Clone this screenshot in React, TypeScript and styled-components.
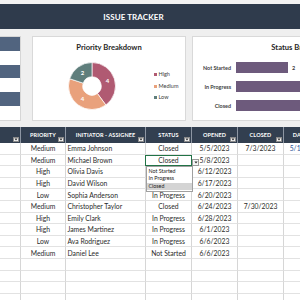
import React from 'react';
import styled, { createGlobalStyle } from 'styled-components';

const Global = createGlobalStyle`
  html, body { margin: 0; padding: 0; background: #ffffff; }
  body { font-family: Lato, "Liberation Sans", sans-serif; overflow: hidden; }
  * { box-sizing: border-box; }
`;

const Page = styled.div`
  width: 300px;
  height: 300px;
  overflow: hidden;
  background: #ffffff;
`;

const TopStrip = styled.div`
  height: 4px;
  background: #f3f3f3;
`;

const TitleBar = styled.div`
  height: 25px;
  background: #2f3b4c;
  color: #ffffff;
  display: flex;
  align-items: center;
  justify-content: center;
  padding-right: 33px;
  font-weight: 700;
  font-size: 8px;
  letter-spacing: 0.1px;
`;

const Dashboard = styled.div`
  height: 98px;
  background: #efefef;
  display: flex;
  align-items: flex-start;
  padding-top: 7px;
`;

const KpiColumn = styled.div`
  width: 21px;
  height: 85px;
  flex: none;
  background: #ffffff;
  border: 1px solid #d6d6d6;
  border-left: none;
  display: flex;
  flex-direction: column;
`;

const KpiBar = styled.div`
  height: 14px;
  background: #51647f;
`;

const KpiBody = styled.div`
  height: 14.3px;
  background: #ffffff;
`;

const Panel = styled.div<{ $w: number; $ml: number }>`
  width: ${(p) => p.$w}px;
  margin-left: ${(p) => p.$ml}px;
  height: 85px;
  flex: none;
  background: #ffffff;
  border: 1px solid #d9d9d9;
  display: flex;
  flex-direction: column;
`;

const PanelTitle = styled.div`
  text-align: center;
  font-weight: 700;
  font-size: 7.6px;
  color: #262626;
  padding-top: 5px;
  line-height: 10px;
`;

const DonutBody = styled.div`
  display: flex;
  align-items: center;
  padding-left: 35px;
  margin-top: 10px;
  gap: 38px;
`;

const Legend = styled.div`
  display: flex;
  flex-direction: column;
  gap: 4.5px;
`;

const LegendItem = styled.div`
  display: flex;
  align-items: center;
  gap: 1.5px;
  font-size: 5.5px;
  color: #404040;
  line-height: 7px;
`;

const Swatch = styled.span<{ $c: string }>`
  width: 3px;
  height: 3px;
  background: ${(p) => p.$c};
`;

const BarChart = styled.div`
  display: grid;
  grid-template-columns: 38px 1fr;
  column-gap: 5px;
  row-gap: 8px;
  margin-top: 10px;
  align-items: center;
`;

const BarLabel = styled.div`
  text-align: right;
  font-weight: 700;
  font-size: 5.4px;
  color: #404040;
`;

const BarTrack = styled.div`
  display: flex;
  align-items: center;
  gap: 4px;
  height: 11px;
`;

const Bar = styled.div`
  height: 11px;
  background: #6d5a7c;
  flex: none;
`;

const BarValue = styled.span`
  font-size: 5.5px;
  font-weight: 700;
  color: #404040;
`;

const Sheet = styled.div`
  display: grid;
  grid-template-columns: 21px 45px 80px 46px 46px 46px 46px;
  grid-auto-rows: 11.6px;
  grid-template-rows: 16px;
  width: 330px;
`;

const HeadCell = styled.div`
  position: relative;
  background: #323f50;
  color: #ffffff;
  font-weight: 700;
  font-size: 5.5px;
  display: flex;
  align-items: center;
  justify-content: center;
  border-right: 1px solid #8d96a3;
  letter-spacing: 0.1px;
  padding-bottom: 1px;
`;

const FilterBox = styled.span`
  position: absolute;
  right: 1px;
  bottom: 1px;
  width: 6px;
  height: 5px;
  background: #f4f4f4;
  border: 0.5px solid #8a8a8a;
  display: flex;
  align-items: center;
  justify-content: center;
`;

const Cell = styled.div<{ $align?: 'left' | 'center'; $blue?: boolean }>`
  position: relative;
  font-size: 6.8px;
  color: ${(p) => (p.$blue ? '#2f5597' : '#2b2b2b')};
  display: flex;
  align-items: center;
  justify-content: ${(p) => (p.$align === 'left' ? 'flex-start' : 'center')};
  padding-left: ${(p) => (p.$align === 'left' ? '1.5px' : '0')};
  border-right: 1px solid #d6d6d6;
  border-bottom: 1px solid #e2e2e2;
  white-space: nowrap;
`;

const Selection = styled.div`
  position: absolute;
  inset: 0 -1px -1px -1px;
  border: 1.5px solid #217346;
  z-index: 2;
  pointer-events: none;
`;

const DropButton = styled.div`
  position: absolute;
  left: calc(100% + 1px);
  top: 4px;
  width: 7px;
  height: 7px;
  background: #f7f7f7;
  border: 0.5px solid #9a9a9a;
  display: flex;
  align-items: center;
  justify-content: center;
  z-index: 3;
`;

const DropList = styled.div`
  position: absolute;
  left: -0.5px;
  top: calc(100% + 1px);
  width: 47px;
  background: #ffffff;
  border: 0.5px solid #a0a0a0;
  z-index: 3;
  display: flex;
  flex-direction: column;
  padding: 1px 0;
`;

const DropItem = styled.div<{ $active?: boolean }>`
  height: 7.2px;
  line-height: 7.2px;
  font-size: 5.3px;
  color: #222222;
  padding-left: 2px;
  background: ${(p) => (p.$active ? '#d4d4d4' : 'transparent')};
`;

const Tri = () => (
  <svg width="4" height="3" viewBox="0 0 4 3">
    <path d="M0.3 0.5 L3.7 0.5 L2 2.6 Z" fill="#333" />
  </svg>
);

type Row = { p: string; n: string; s: string; o: string; c?: string; d?: string };

const rows: Row[] = [
  { p: 'Medium', n: 'Emma Johnson', s: 'Closed', o: '5/5/2023', c: '7/3/2023', d: '5/15/2023' },
  { p: 'Medium', n: 'Michael Brown', s: 'Closed', o: '5/8/2023' },
  { p: 'High', n: 'Olivia Davis', s: 'Not Started', o: '6/12/2023' },
  { p: 'High', n: 'David Wilson', s: 'In Progress', o: '6/17/2023' },
  { p: 'Low', n: 'Sophia Anderson', s: 'In Progress', o: '6/20/2023' },
  { p: 'Medium', n: 'Christopher Taylor', s: 'Closed', o: '6/24/2023', c: '7/30/2023' },
  { p: 'High', n: 'Emily Clark', s: 'In Progress', o: '6/28/2023' },
  { p: 'High', n: 'James Martinez', s: 'In Progress', o: '6/1/2023' },
  { p: 'Low', n: 'Ava Rodriguez', s: 'In Progress', o: '6/6/2023' },
  { p: 'Medium', n: 'Daniel Lee', s: 'Not Started', o: '6/6/2023' },
];

const headers = ['', 'PRIORITY', 'INITIATOR - ASSIGNEE', 'STATUS', 'OPENED', 'CLOSED', 'DATE DUE'];

const segs = [
  { label: 'High', value: 4, color: '#b05a72' },
  { label: 'Medium', value: 4, color: '#e9a17c' },
  { label: 'Low', value: 2, color: '#5f7e7c' },
];

function arcPath(a0: number, a1: number, R: number, r: number, cx: number, cy: number) {
  const p = (a: number, rad: number) => [cx + rad * Math.sin(a), cy - rad * Math.cos(a)];
  const [x0, y0] = p(a0, R);
  const [x1, y1] = p(a1, R);
  const [x2, y2] = p(a1, r);
  const [x3, y3] = p(a0, r);
  const large = a1 - a0 > Math.PI ? 1 : 0;
  return `M${x0} ${y0} A${R} ${R} 0 ${large} 1 ${x1} ${y1} L${x2} ${y2} A${r} ${r} 0 ${large} 0 ${x3} ${y3} Z`;
}

const Donut = () => {
  const total = segs.reduce((s, x) => s + x.value, 0);
  let acc = 0;
  const cx = 24;
  const cy = 24;
  return (
    <svg width="48" height="48" viewBox="0 0 48 48">
      {segs.map((s) => {
        const a0 = (acc / total) * Math.PI * 2;
        acc += s.value;
        const a1 = (acc / total) * Math.PI * 2;
        const mid = (a0 + a1) / 2;
        const lr = 16.3;
        return (
          <g key={s.label}>
            <path d={arcPath(a0, a1, 23.5, 9.2, cx, cy)} fill={s.color} stroke="#ffffff" strokeWidth="0.7" />
            <text
              x={cx + lr * Math.sin(mid)}
              y={cy - lr * Math.cos(mid) + 2}
              fontSize="6"
              fontWeight="700"
              fill="#ffffff"
              textAnchor="middle"
              fontFamily="Lato, 'Liberation Sans', sans-serif"
            >
              {s.value}
            </text>
          </g>
        );
      })}
    </svg>
  );
};

const statusBars = [
  { label: 'Not Started', value: 2 },
  { label: 'In Progress', value: 5 },
  { label: 'Closed', value: 3 },
];

export default function App() {
  return (
    <Page>
      <Global />
      <TopStrip />
      <TitleBar>ISSUE TRACKER</TitleBar>
      <Dashboard>
        <KpiColumn>
          {[0, 1, 2].map((i) => (
            <React.Fragment key={i}>
              <KpiBar />
              <KpiBody />
            </React.Fragment>
          ))}
        </KpiColumn>
        <Panel $w={154} $ml={11}>
          <PanelTitle>Priority Breakdown</PanelTitle>
          <DonutBody>
            <Donut />
            <Legend>
              {segs.map((s) => (
                <LegendItem key={s.label}>
                  <Swatch $c={s.color} />
                  {s.label}
                </LegendItem>
              ))}
            </Legend>
          </DonutBody>
        </Panel>
        <Panel $w={220} $ml={6}>
          <PanelTitle>Status Breakdown</PanelTitle>
          <BarChart>
            {statusBars.map((b) => (
              <React.Fragment key={b.label}>
                <BarLabel>{b.label}</BarLabel>
                <BarTrack>
                  <Bar style={{ width: b.value * 26 }} />
                  <BarValue>{b.value}</BarValue>
                </BarTrack>
              </React.Fragment>
            ))}
          </BarChart>
        </Panel>
      </Dashboard>
      <Sheet>
        {headers.map((h, i) => (
          <HeadCell key={i}>
            {h}
            {i < 6 && (
              <FilterBox>
                <Tri />
              </FilterBox>
            )}
          </HeadCell>
        ))}
        {rows.map((r, i) => (
          <React.Fragment key={i}>
            <Cell />
            <Cell>{r.p}</Cell>
            <Cell $align="left">{r.n}</Cell>
            <Cell>
              {i === 2 || i === 3 ? '' : r.s}
              {i === 1 && (
                <>
                  <Selection />
                  <DropButton>
                    <Tri />
                  </DropButton>
                  <DropList>
                    <DropItem>Not Started</DropItem>
                    <DropItem>In Progress</DropItem>
                    <DropItem $active>Closed</DropItem>
                  </DropList>
                </>
              )}
            </Cell>
            <Cell>{r.o}</Cell>
            <Cell>{r.c ?? ''}</Cell>
            <Cell $blue>{r.d ?? ''}</Cell>
          </React.Fragment>
        ))}
        {Array.from({ length: 5 * 7 }).map((_, i) => (
          <Cell key={`e${i}`} />
        ))}
      </Sheet>
    </Page>
  );
}
